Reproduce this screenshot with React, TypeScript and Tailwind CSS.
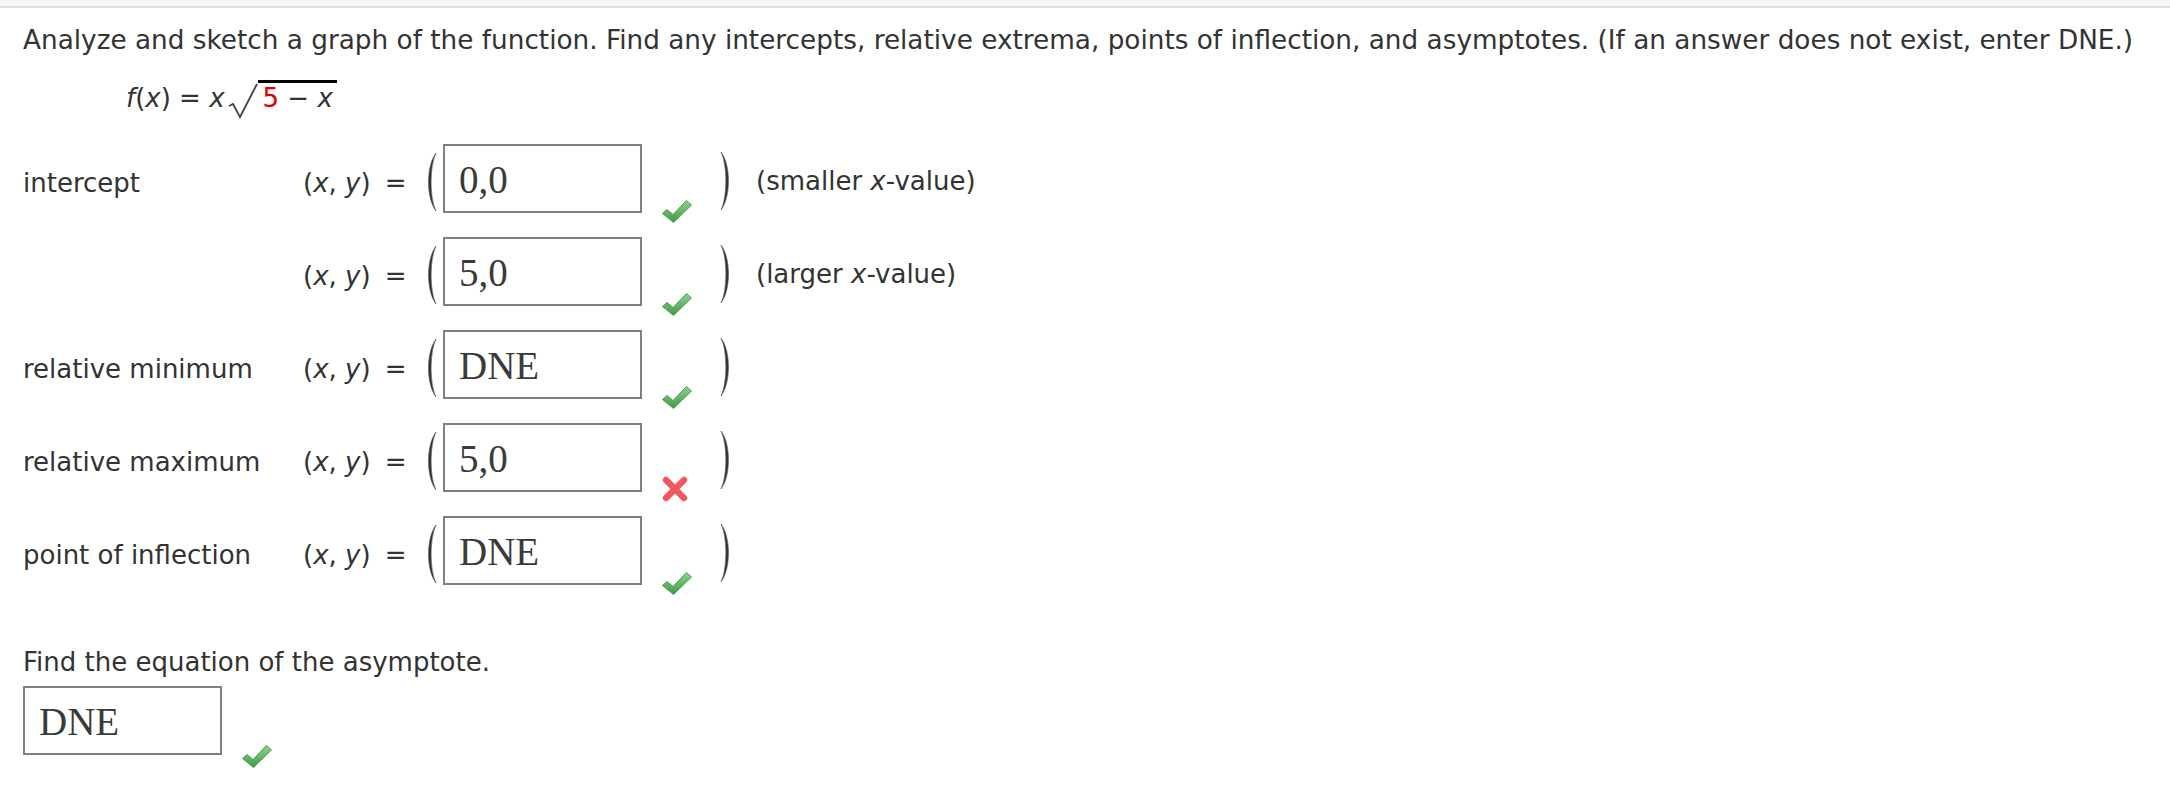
import React from "react";

const Check = () => (
  <svg width="32" height="25" viewBox="0 0 32 25">
    <defs>
      <linearGradient id="cg" x1="0" y1="0" x2="0" y2="1">
        <stop offset="0" stopColor="#8fd18f" />
        <stop offset="1" stopColor="#3f9b45" />
      </linearGradient>
    </defs>
    <path d="M1.5 14.5 L6 10.5 L12 15.5 L25.5 1.5 L30.5 6 L12.5 23.5 Z" fill="url(#cg)" stroke="#4a9e4f" strokeWidth="1" strokeLinejoin="round" />
  </svg>
);

const Cross = () => (
  <svg width="28" height="28" viewBox="0 0 28 28">
    <path d="M5 5 L23 23 M23 5 L5 23" stroke="#f2585e" strokeWidth="6.5" strokeLinecap="round" />
  </svg>
);

const LParen = () => (
  <svg width="16" height="60" viewBox="0 0 16 60">
    <path d="M13 1 C3 14 3 46 13 59 C6.5 46 6.5 14 13 1 Z" fill="#333" stroke="#555" strokeWidth="0.6" />
  </svg>
);

const RParen = () => (
  <svg width="16" height="60" viewBox="0 0 16 60">
    <path d="M3 1 C13 14 13 46 3 59 C9.5 46 9.5 14 3 1 Z" fill="#333" stroke="#555" strokeWidth="0.6" />
  </svg>
);

const serif = { fontFamily: '"Liberation Serif", "Times New Roman", serif' };

function AnswerBox({ value }: { value: string }) {
  return (
    <div
      className="w-[199px] h-[69px] border-2 border-[#808080] bg-white flex items-center pl-[14px] text-[39px] text-[#3a3a3a] leading-none pt-[2px]"
      style={serif}
    >
      {value}
    </div>
  );
}

function Row({ label, value, ok, note }: { label: string; value: string; ok: boolean; note?: string }) {
  return (
    <div className="flex items-center h-[69px]">
      <div className="w-[280px] pt-[10px] whitespace-nowrap">{label}</div>
      <div className="w-[120px] pt-[10px] whitespace-nowrap">
        (<i>x</i>, <i>y</i>)<span className="ml-[14px]">=</span>
      </div>
      <div className="pt-[8px]">
        <LParen />
      </div>
      <div className="ml-[4px]">
        <AnswerBox value={value} />
      </div>
      <div className="w-[76px] h-[69px] flex items-end pl-[19px]">
        <div className="mb-[-11px]">{ok ? <Check /> : <Cross />}</div>
      </div>
      <div className="pt-[6px]">
        <RParen />
      </div>
      {note && (
        <div className="ml-[22px] pt-[6px] whitespace-nowrap">
          {note.split("x")[0]}
          <i>x</i>
          {note.split("x")[1]}
        </div>
      )}
    </div>
  );
}

export default function App() {
  return (
    <div
      className="w-[2170px] h-[812px] bg-white text-[#333] text-[26px] leading-[1.2]"
      style={{ fontFamily: '"DejaVu Sans", Verdana, sans-serif' }}
    >
      <div className="h-[8px] bg-[#f6f6f6] border-b-2 border-[#dedede]" />
      <div className="pl-[23px] pt-[17px]">
        <div className="whitespace-nowrap text-[26.3px]">
          Analyze and sketch a graph of the function. Find any intercepts, relative extrema, points of inflection, and
          asymptotes. (If an answer does not exist, enter DNE.)
        </div>
        <div className="flex items-end mt-[23px] ml-[103px]">
          <span>
            <i>f</i>(<i>x</i>) = <i>x</i>
          </span>
          <svg width="30" height="36" viewBox="0 0 30 36" className="mb-[-5px] ml-[3px]">
            <path d="M1 23 L5 21 L12 34 L29 1" fill="none" stroke="#444" strokeWidth="1.8" />
          </svg>
          <span className="border-t-[3px] border-black pl-[5px] pr-[4px] whitespace-nowrap">
            <span className="text-[#e00000]">5</span> − <i>x</i>
          </span>
        </div>
        <div className="mt-[30px] flex flex-col gap-[24px]">
          <Row label="intercept" value="0,0" ok note="(smaller x-value)" />
          <Row label="" value="5,0" ok note="(larger x-value)" />
          <Row label="relative minimum" value="DNE" ok />
          <Row label="relative maximum" value="5,0" ok={false} />
          <Row label="point of inflection" value="DNE" ok />
        </div>
        <div className="mt-[62px]">Find the equation of the asymptote.</div>
        <div className="flex items-end mt-[8px]">
          <AnswerBox value="DNE" />
          <div className="ml-[19px] mb-[-14px]">
            <Check />
          </div>
        </div>
      </div>
    </div>
  );
}
